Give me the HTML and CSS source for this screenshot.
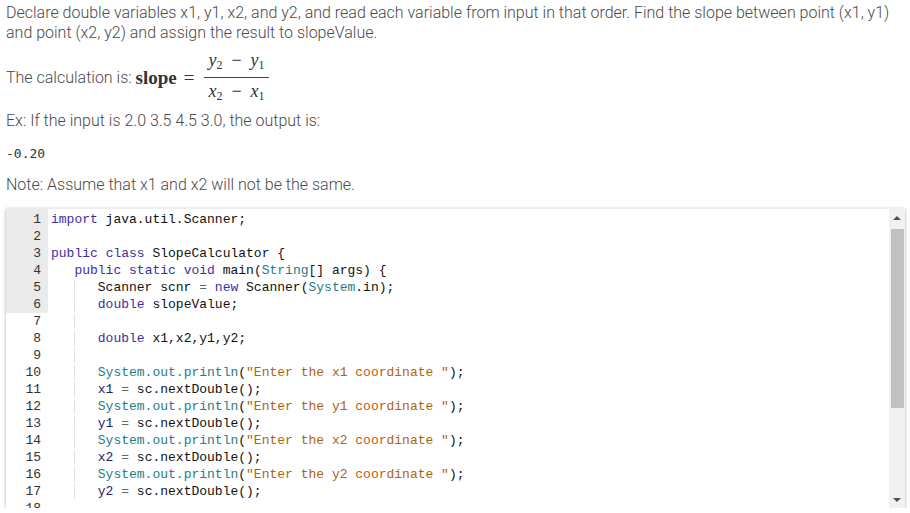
FILE: index.html
```html
<!DOCTYPE html>
<html>
<head>
<meta charset="utf-8">
<link rel="stylesheet" href="styles.css">
</head>
<body>
<div class="page">
  <p class="para first">Declare double variables x1, y1, x2, and y2, and read each variable from input in that order. Find the slope between point (x1, y1) and point (x2, y2) and assign the result to slopeValue.</p>
  <div class="para mathline">
    <span>The calculation is:&nbsp;</span>
    <span class="math">
      <span class="mbold">slope</span>
      <span class="eq">=</span>
      <span class="frac">
        <span class="num"><i>y</i><sub>2</sub><span class="minus">−</span><i>y</i><sub>1</sub></span>
        <span class="den"><i>x</i><sub>2</sub><span class="minus">−</span><i>x</i><sub>1</sub></span>
      </span>
    </span>
  </div>
  <p class="para ex">Ex: If the input is 2.0 3.5 4.5 3.0, the output is:</p>
  <pre class="output">-0.20</pre>
  <p class="para note">Note: Assume that x1 and x2 will not be the same.</p>

  <div class="editor">
    <div class="gutter">
      <div class="gl act">1</div><div class="gl act">2</div><div class="gl act">3</div><div class="gl act">4</div><div class="gl act">5</div><div class="gl act">6</div>
      <div class="gl">7</div><div class="gl">8</div><div class="gl">9</div><div class="gl">10</div><div class="gl">11</div><div class="gl">12</div><div class="gl">13</div><div class="gl">14</div><div class="gl">15</div><div class="gl">16</div><div class="gl">17</div><div class="gl">18</div>
    </div>
    <div class="code">
      <div class="cl"><span class="kw">import</span> java.util.Scanner;</div>
      <div class="cl"></div>
      <div class="cl"><span class="kw">public</span> <span class="kw">class</span> SlopeCalculator {</div>
      <div class="cl">   <span class="kw">public</span> <span class="kw">static</span> <span class="kw">void</span> main(<span class="ty">String</span>[] args) {</div>
      <div class="cl"><span class="ig">   </span>   Scanner scnr <span class="op">=</span> <span class="kw">new</span> Scanner(<span class="ty">System</span>.in);</div>
      <div class="cl"><span class="ig">   </span>   <span class="kw">double</span> slopeValue;</div>
      <div class="cl"><span class="ig">   </span></div>
      <div class="cl"><span class="ig">   </span>   <span class="kw">double</span> x1,x2,y1,y2;</div>
      <div class="cl"><span class="ig">   </span></div>
      <div class="cl"><span class="ig">   </span>   <span class="ty">System.out.println</span>(<span class="st">"Enter the x1 coordinate "</span>);</div>
      <div class="cl"><span class="ig">   </span>   <span class="va">x1</span> <span class="op">=</span> sc.nextDouble();</div>
      <div class="cl"><span class="ig">   </span>   <span class="ty">System.out.println</span>(<span class="st">"Enter the y1 coordinate "</span>);</div>
      <div class="cl"><span class="ig">   </span>   <span class="va">y1</span> <span class="op">=</span> sc.nextDouble();</div>
      <div class="cl"><span class="ig">   </span>   <span class="ty">System.out.println</span>(<span class="st">"Enter the x2 coordinate "</span>);</div>
      <div class="cl"><span class="ig">   </span>   <span class="va">x2</span> <span class="op">=</span> sc.nextDouble();</div>
      <div class="cl"><span class="ig">   </span>   <span class="ty">System.out.println</span>(<span class="st">"Enter the y2 coordinate "</span>);</div>
      <div class="cl"><span class="ig">   </span>   <span class="va">y2</span> <span class="op">=</span> sc.nextDouble();</div>
      <div class="cl"></div>
    </div>
    <div class="scrollbar">
      <div class="arrow up"></div>
      <div class="track"><div class="thumb"></div></div>
      <div class="arrow down"></div>
    </div>
  </div>
</div>
</body>
</html>
```

FILE: styles.css
```css
html, body {
  margin: 0;
  padding: 0;
  background: #ffffff;
}
.page {
  width: 899px;
  padding: 3px 0 0 6px;
  font-family: Roboto, "Liberation Sans", sans-serif;
  font-weight: 300;
  font-size: 16px;
  line-height: 20px;
  color: #4a4a4a;
}
.para {
  margin: 0;
}
.mathline {
  display: flex;
  align-items: center;
  height: 52px;
  margin-top: 9px;
}
.math {
  display: inline-flex;
  align-items: center;
  font-family: "Liberation Serif", "DejaVu Serif", serif;
  font-weight: 400;
  color: #333;
  font-size: 19px;
}
.mbold {
  font-weight: 700;
}
.eq {
  margin: 0 8px 0 7px;
}
.frac {
  display: inline-flex;
  flex-direction: column;
  align-items: center;
  font-size: 18px;
  padding: 0 2px;
}
.num, .den {
  line-height: 20px;
  padding: 0 4px;
}
.num {
  border-bottom: 1px solid #444;
  padding-bottom: 2px;
}
.den {
  padding-top: 3px;
}
.frac sub {
  font-size: 12px;
  vertical-align: -3px;
}
.minus {
  margin: 0 9px;
}
.ex {
  margin-top: 7px;
}
.output {
  margin: 13px 0 0;
  font-family: "DejaVu Sans Mono", "Liberation Mono", monospace;
  font-size: 13px;
  line-height: 20px;
  color: #333;
  font-weight: 400;
}
.note {
  margin-top: 11px;
}
.editor {
  margin-top: 13px;
  height: 299px;
  display: flex;
  overflow: hidden;
  position: relative;
  border-top: 1px solid #eeeeee;
  box-shadow: 0 1px 3px rgba(0, 0, 0, 0.35);
  font-family: "Liberation Mono", "DejaVu Sans Mono", monospace;
  font-size: 13px;
  font-weight: 400;
  line-height: 17px;
  color: #111;
  background: #fff;
}
.gutter {
  width: 42px;
  flex: none;
  padding-top: 2px;
}
.gl {
  height: 17px;
  text-align: right;
  padding-right: 7px;
  color: #333;
}
.gl.act {
  background: #ebebeb;
}
.gutter .gl.act:first-child {
  margin-top: -2px;
  padding-top: 2px;
}
.code {
  flex: 1;
  padding-top: 2px;
  padding-left: 3px;
}
.cl {
  height: 17px;
  white-space: pre;
}
.ig {
  box-shadow: inset -1px 0 0 #e2e2e2;
  margin-right: -1px;
  padding-right: 1px;
}
.kw { color: #3b2ea3; }
.ty { color: #237d8c; }
.st { color: #b1620e; }
.va { color: #1c2463; }
.op { color: #666; }
.scrollbar {
  width: 16px;
  flex: none;
  background: #f1f1f1;
  display: flex;
  flex-direction: column;
}
.arrow {
  height: 17px;
  display: flex;
  align-items: center;
  justify-content: center;
}
.arrow::before {
  content: "";
  width: 0;
  height: 0;
  border-left: 4px solid transparent;
  border-right: 4px solid transparent;
}
.arrow.up::before {
  border-bottom: 4px solid #505050;
}
.arrow.down::before {
  border-top: 4px solid #505050;
}
.track {
  flex: 1;
  padding: 3px 1px 0 2px;
}
.thumb {
  height: 179px;
  background: #c1c1c1;
}
```
